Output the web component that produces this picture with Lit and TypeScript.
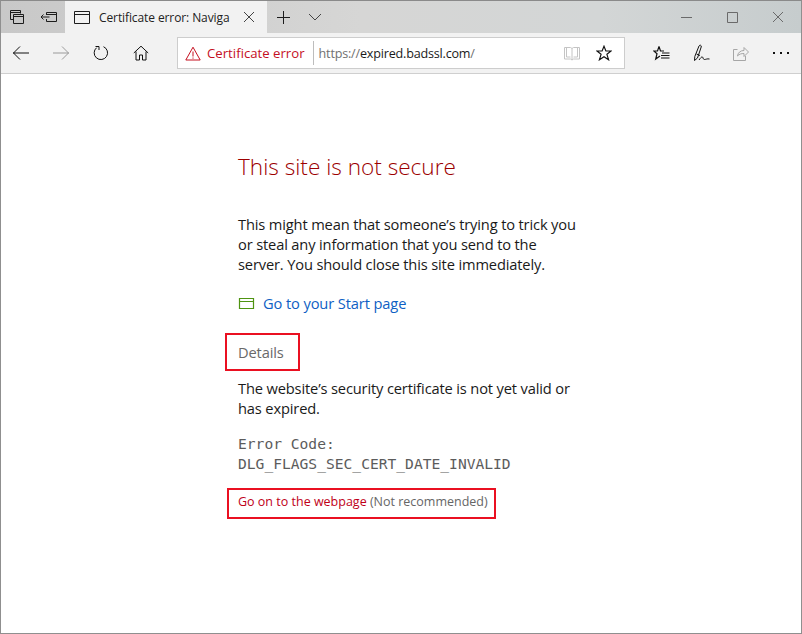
import { LitElement, html, css, svg } from "lit";
import { customElement } from "lit/decorators.js";

const ic = (w: number, h: number, body: unknown) =>
  html`<svg width=${w} height=${h} viewBox="0 0 ${w} ${h}" fill="none" stroke="currentColor" stroke-width="1">${body}</svg>`;

@customElement("app-root")
export class AppRoot extends LitElement {
  static styles = css`
    :host { display: block; width: 802px; height: 634px; font-family: "Open Sans", "Noto Sans", sans-serif; color: #1a1a1a; background: #fff; }
    * { box-sizing: border-box; }
    .win { width: 802px; height: 634px; border: 1px solid #8f8f8f; border-top-color: #8a8a8a; display: flex; flex-direction: column; overflow: hidden; }
    .strip { height: 32px; flex: none; display: flex; background: linear-gradient(90deg, #c8c8c8, #d6d6d5 45%, #d3d6d6 75%, #c6cccd); color: #1c1c1c; }
    .sbtn { width: 32px; display: flex; align-items: center; justify-content: center; flex: none; }
    .tab { width: 202px; flex: none; background: #f2f2f2; display: flex; align-items: center; font-size: 12px; padding-left: 9px; }
    .tab .ttl { margin-left: 9px; width: 136px; white-space: nowrap; overflow: hidden; color: #222; letter-spacing: -0.1px; }
    .tab .x { margin-left: 8px; display: flex; color: #444; }
    .plus { width: 33px; display: flex; justify-content: center; align-items: center; flex: none; }
    .chev { width: 30px; display: flex; justify-content: center; align-items: center; flex: none; color: #444; }
    .spacer { flex: 1; }
    .wc { width: 46px; display: flex; align-items: center; justify-content: center; color: #6a6a6a; flex: none; }
    .tools { height: 41px; flex: none; background: #f2f2f2; border-bottom: 1px solid #cfcfcf; display: flex; align-items: center; color: #111; }
    .tb { width: 40px; height: 40px; display: flex; align-items: center; justify-content: center; flex: none; }
    .tb.off { color: #9a9a9a; }
    .tb.faint { color: #c4c4c4; }
    .addr { width: 448px; height: 32px; margin-left: 16px; padding-right: 4px; background: #fff; border: 1px solid #cdcdcd; display: flex; align-items: center; flex: none; }
    .warn { margin-left: 7px; display: flex; color: #c50f1f; }
    .certerr { color: #c50f1f; margin-left: 6px; font-size: 13.2px; }
    .sep { width: 1px; height: 24px; background: #bdbdbd; margin-left: 8px; }
    .url { margin-left: 5px; color: #707070; font-size: 12.6px; letter-spacing: -0.2px; flex: 1; }
    .url b { font-weight: 400; color: #1a1a1a; }
    .addr .tb { width: 32px; height: 30px; }
    .right { margin-left: 16px; display: flex; }
    .right .tb { width: 40px; }
    .page { flex: 1; background: #fff; padding: 77px 0 0 237px; }
    h1 { margin: 0; font-weight: 300; font-size: 22.6px; line-height: 32px; color: #9c0000; }
    p { margin: 0; font-size: 14.67px; line-height: 20px; color: #1a1a1a; letter-spacing: -0.15px; }
    .intro { margin-top: 31px; width: 350px; }
    .start { margin-top: 19px; display: flex; align-items: center; height: 20px; font-size: 14.67px; color: #0f5fc4; letter-spacing: -0.12px; }
    .start span { margin-left: 8px; }
    .box { border: 2px solid #ea1021; }
    .details { margin: 20px 0 0 -13px; width: 75px; height: 38px; padding: 7px 0 0 11px; font-size: 14.67px; line-height: 20px; color: #696969; letter-spacing: -0.14px; }
    .why { margin-top: 7px; width: 350px; }
    .code { margin-top: 16px; font-family: "DejaVu Sans Mono", monospace; font-size: 14.62px; line-height: 20px; color: #5c5c5c; }
    .go { margin: 14px 0 0 -11px; width: 269px; height: 31px; padding: 2px 0 0 9px; font-size: 12.5px; line-height: 20px; white-space: nowrap; color: #666; }
    .go em { font-style: normal; color: #c00018; }
  `;

  render() {
    return html`<div class="win">
      <div class="strip">
        <div class="sbtn">${ic(16, 16, svg`<path d="M1.500 1.500h10v3M1.500 3.500h10M1.500 1.500v9h3"/><path d="M4.500 5.500h10v9h-10zM4.500 7.500h10"/>`)}</div>
        <div class="sbtn">${ic(18, 14, svg`<path d="M6.500 2.500h10v9h-10v-2.500M6.500 2.500v2.500M1 7h8.500M3.500 4.500L1 7l2.500 2.500M6.500 4.500h10"/>`)}</div>
        <div class="tab">
          ${ic(16, 14, svg`<path d="M.5 1.500h15v12H.5zM.5 4.500h15"/>`)}
          <span class="ttl">Certificate error: Naviga</span>
          <span class="x">${ic(12, 12, svg`<path d="M1 1l10 10M11 1L1 11"/>`)}</span>
        </div>
        <div class="plus">${ic(13, 13, svg`<path d="M6.500 0v13M0 6.500h13"/>`)}</div>
        <div class="chev">${ic(14, 8, svg`<path d="M1 1l6 6 6-6"/>`)}</div>
        <div class="spacer"></div>
        <div class="wc">${ic(11, 11, svg`<path d="M0 5.500h11"/>`)}</div>
        <div class="wc">${ic(11, 11, svg`<path d="M.5.5h10v10H.5z"/>`)}</div>
        <div class="wc">${ic(12, 12, svg`<path d="M1 1l10 10M11 1L1 11"/>`)}</div>
      </div>
      <div class="tools">
        <div class="tb">${ic(16, 14, svg`<path d="M0 7h16M7 .5L.5 7 7 13.500"/>`)}</div>
        <div class="tb off">${ic(16, 14, svg`<path d="M0 7h16M9 .5L15.500 7 9 13.500"/>`)}</div>
        <div class="tb">${ic(16, 16, svg`<path d="M10.500 1.700A6.700 6.700 0 1 1 3.600 2.700M2.500 1.500h3.500v3.500"/>`)}</div>
        <div class="tb">${ic(16, 16, svg`<path d="M.8 8L8 1.200 15.200 8M3 6.500v8.500h3.500v-5h3v5H13V6.500"/>`)}</div>
        <div class="addr">
          <span class="warn">${ic(16, 15, svg`<path d="M8 1.200L15.200 14H.8zM8 5.500v5M8 11.500v1.200"/>`)}</span>
          <span class="certerr">Certificate error</span>
          <span class="sep"></span>
          <span class="url">https://<b>expired.badssl.com</b>/</span>
          <div class="tb faint">${ic(16, 15, svg`<path d="M.5 1.500h6l1.500 1 1.500-1h6v11.500h-6L8 14l-1.500-1h-6zM8 2.500V14M2.500 1.500V11h4M13.500 1.500V11h-4"/>`)}</div>
          <div class="tb">${ic(16, 16, svg`<path stroke-width="1.150" d="M8 1.200l1.900 4.800h5.200l-4.200 3.300 1.700 5.500L8 11.700l-4.600 3.100 1.700-5.500L.9 6h5.200z"/>`)}</div>
        </div>
        <div class="right">
          <div class="tb">${ic(17, 16, svg`<path stroke-width="1.200" d="M6 1.500L7.500 6H11M6 1.500L4.500 6H.8l3.200 2.700L2.700 14 7 11M9 8h7.500M8 10.500h8.500M8 13h8.500"/>`)}</div>
          <div class="tb">${ic(17, 18, svg`<path d="M1.500 16.500l.3-4L6 2c.7-1.500 2.800-.8 2.200 1L4.500 14zM3.500 10l3.500 1.500"/><path d="M6 16c1.500-2 2.500-3.500 3.500-3 .7.500.5 2.500 2 2.500 1.500 0 2.500-1 5-.5"/>`)}</div>
          <div class="tb off">${ic(16, 16, svg`<path stroke="#a6a6a6" d="M4.500 4.500H.5v11h12v-4.500M4.500 11c.5-3.500 3-5.500 6.500-5.500V2.500l4.500 4.500L11 11.500V8.500c-2.500 0-5 .5-6.500 2.500z"/>`)}</div>
          <div class="tb">${ic(17, 4, svg`<g fill="currentColor" stroke="none"><rect x="0" y="1" width="2" height="2"/><rect x="7" y="1" width="2" height="2"/><rect x="14" y="1" width="2" height="2"/></g>`)}</div>
        </div>
      </div>
      <div class="page">
        <h1>This site is not secure</h1>
        <p class="intro">This might mean that someone’s trying to trick you<br />or steal any information that you send to the<br />server. You should close this site immediately.</p>
        <div class="start"><svg width="17" height="13" viewBox="0 0 17 13" fill="none" stroke="#4f9412" stroke-width="1.200"><path d="M1.500 1.500h14v10h-14zM1.500 4.500h14"/></svg><span>Go to your Start page</span></div>
        <div class="box details">Details</div>
        <p class="why">The website’s security certificate is not yet valid or<br />has expired.</p>
        <div class="code">Error Code:<br />DLG_FLAGS_SEC_CERT_DATE_INVALID</div>
        <div class="box go"><em>Go on to the webpage</em> (Not recommended)</div>
      </div>
    </div>`;
  }
}
